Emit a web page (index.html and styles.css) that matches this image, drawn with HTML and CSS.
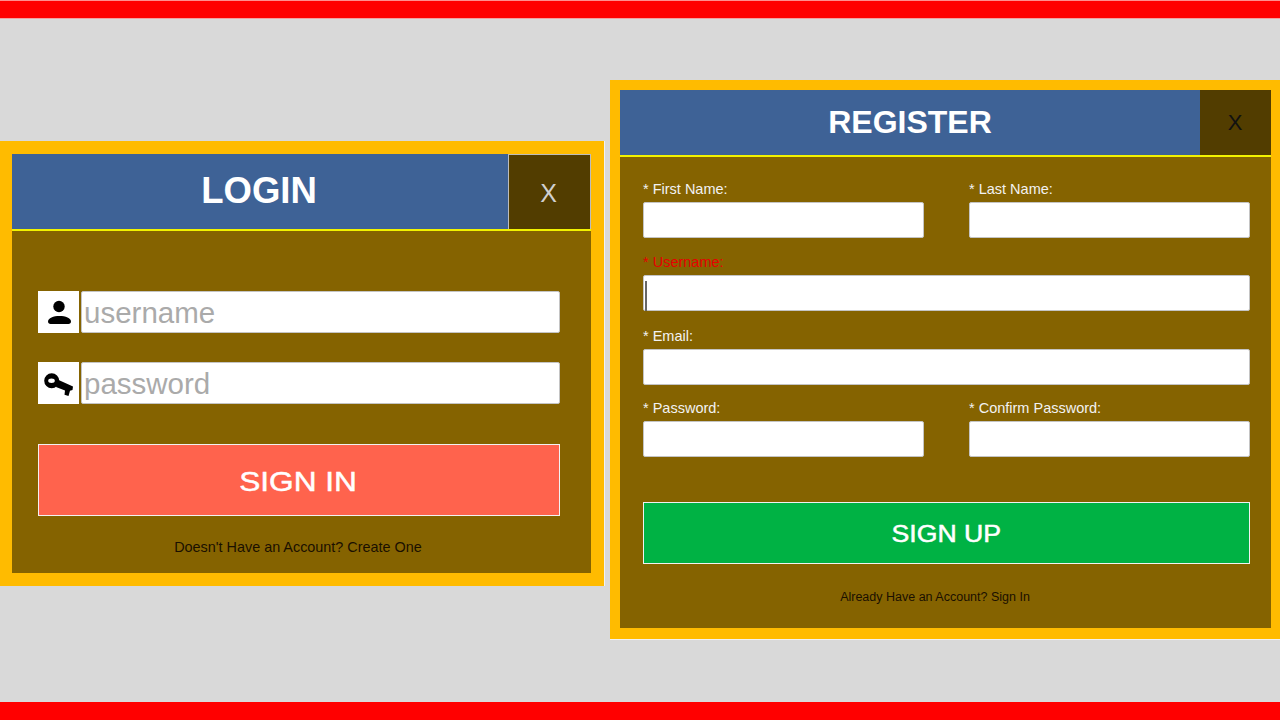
FILE: index.html
```html
<!DOCTYPE html>
<html lang="en">
<head>
<meta charset="utf-8">
<title>Login and Register</title>
<link rel="stylesheet" href="styles.css">
</head>
<body>
<div class="bar bar-top"></div>
<main class="desk">
  <section class="win win-login">
    <header class="head head-login">
      <h1 class="title title-login">LOGIN</h1>
      <button class="close close-login" type="button">X</button>
    </header>
    <form class="body body-login">
      <div class="icon-row">
        <span class="icon-box">
          <svg viewBox="0 0 41 42" width="41" height="42"><circle cx="21" cy="15.500" r="5.700"/><path d="M10 30.500c0-3.500 5.500-5.500 11.500-5.500s11.500 2 11.500 5.500c0 1.500-1 2.500-2.500 2.500H12.500C11 33 10 32 10 30.500z"/></svg>
        </span>
        <input class="field field-big" type="text" placeholder="username">
      </div>
      <div class="icon-row">
        <span class="icon-box">
          <svg viewBox="0 0 41 42" width="41" height="42"><path fill-rule="evenodd" d="M6.200 18.700a7.500 7.500 0 1 0 15 0a7.500 7.500 0 1 0-15 0zM10.200 18.700a3.300 2.200 0 1 0 6.600 0a3.300 2.200 0 1 0-6.600 0z"/><path d="M19.500 17.500L35 24.500l-.5 3.500-2.500.8-1.500 5.200-4-1.200.5-4.300-9-3.500z"/></svg>
        </span>
        <input class="field field-big" type="password" placeholder="password">
      </div>
      <button class="submit submit-in" type="button"><span class="wide-text">SIGN IN</span></button>
      <p class="foot foot-login">Doesn't Have an Account? Create One</p>
    </form>
  </section>

  <section class="win win-reg">
    <header class="head head-reg">
      <h1 class="title title-reg">REGISTER</h1>
      <button class="close close-reg" type="button">X</button>
    </header>
    <form class="body body-reg">
      <div class="grid">
        <label class="lab">* First Name:<input class="field" type="text"></label>
        <label class="lab">* Last Name:<input class="field" type="text"></label>
        <label class="lab wide err">* Username:<span class="caret-wrap"><input class="field" type="text"><i class="caret"></i></span></label>
        <label class="lab wide email">* Email:<input class="field" type="text"></label>
        <label class="lab">* Password:<input class="field" type="password"></label>
        <label class="lab">* Confirm Password:<input class="field" type="password"></label>
      </div>
      <button class="submit submit-up" type="button"><span class="wide-text">SIGN UP</span></button>
      <p class="foot foot-reg">Already Have an Account? Sign In</p>
    </form>
  </section>
</main>
<div class="bar bar-bottom"></div>
</body>
</html>
```
FILE: styles.css
```css
* { box-sizing: border-box; }
html, body { margin: 0; height: 100%; }
body {
  width: 1280px;
  height: 720px;
  overflow: hidden;
  background: #d9d9d9;
  font-family: "Liberation Sans", Arial, sans-serif;
  display: flex;
  flex-direction: column;
}
.bar { background: #ff0000; flex: none; height: 18px; }
.bar-top { border-top: 1px solid #ff8f8f; box-shadow: 0 1px 0 #f2a0a0; }
.desk { position: relative; flex: 1; }

.win { position: absolute; background: #856300; border-style: solid; border-color: #ffbb00; display: flex; flex-direction: column; }
.win-login { left: 0; top: 123px; width: 604px; height: 445px; border-width: 13px 13px 13px 12px; box-shadow: 1px 0 0 #f2f2f2; }
.win-reg { left: 610px; top: 62px; width: 670px; height: 559px; border-width: 10px 9px 11px 10px; box-shadow: 0 1px 0 #f2f2f2; }

.head { display: flex; flex: none; background: #3e6296; border-bottom: 2px solid #f2f200; }
.head-login { height: 77px; }
.head-reg { height: 67px; }
.title { margin: 0; flex: 1; color: #fff; font-weight: 700; text-align: center; }
.title-login { font-size: 36.500px; line-height: 74px; padding-right: 2px; }
.title-reg { font-size: 32px; line-height: 64px; }
.close { flex: none; padding: 0; font-family: inherit; background: #523d00; }
.close-login { width: 83px; border: 1px solid #bcbcbc; border-bottom: 0; color: #d0d0d0; font-size: 25px; padding: 2px 2px 0 0; }
.close-reg { width: 71px; border: 0; color: #111; font-size: 22px; padding-right: 1px; }

.body { flex: 1; display: flex; flex-direction: column; }
.body-login { padding: 60px 31px 0 26px; }
.body-reg { padding: 24px 21px 0 23px; }

.icon-row { display: flex; height: 42px; margin-bottom: 29px; }
.icon-box { flex: none; width: 41px; height: 42px; margin-right: 2px; background: #fff; display: block; }
.icon-box svg { display: block; }
.field { display: block; width: 100%; height: 36px; margin-top: 4px; padding: 0 3px; border: 1px solid #c4c4c4; border-radius: 2px; background: #fff; font-family: inherit; outline: 0; }
.field-big { flex: 1; height: 42px; margin-top: 0; padding: 2px 3px 0 2px; font-size: 29.500px; }
.field-big::placeholder { color: #aaaaaa; opacity: 1; }

.submit { display: block; border: 1px solid #f2f2f2; color: #fff; font-family: inherit; padding: 2px 0 0; -webkit-text-stroke: 0.5px #fff; }
.submit-in { height: 72px; margin-top: 11px; background: #ff634d; font-size: 28.500px; }
.submit-up { height: 62px; margin-top: 45px; background: #00b244; font-size: 24px; }
.wide-text { display: inline-block; transform: scaleX(1.11); }
.submit-in .wide-text { margin-right: 1px; }

.foot { margin: 0; color: #1a1000; text-align: center; }
.foot-login { font-size: 14.400px; margin: 23px 2px 0 0; }
.foot-reg { font-size: 12.500px; margin: 26px 23px 0 0; }

.grid { display: grid; grid-template-columns: 281px 281px; column-gap: 45px; row-gap: 16px; }
.lab { display: block; color: #f2f2f2; font-size: 14.500px; line-height: 17px; }
.wide { grid-column: 1 / -1; }
.email { margin: 1px 0 -1px; }
.err { color: #e60000; }
.caret-wrap { display: block; position: relative; }
.caret { position: absolute; left: 2px; top: 6px; width: 2px; height: 30px; background: #666; }
```
